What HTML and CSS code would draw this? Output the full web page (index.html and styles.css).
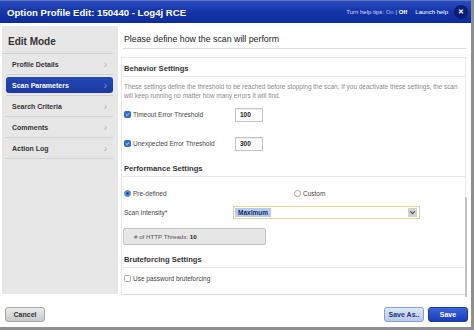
FILE: index.html
```html
<!DOCTYPE html>
<html lang="en">
<head>
  <meta charset="UTF-8">
  <title>Option Profile Edit</title>
  <link rel="stylesheet" href="styles.css">
</head>
<body>
  <div class="dialog">
    <div class="titlebar">
      <h1>Option Profile Edit: 150440 - Log4j RCE</h1>
      <div class="help">
        <span class="tips">Turn help tips: <span class="on">On</span> | <b>Off</b></span>
        <span class="launch">Launch help</span>
        <span class="close">&#x2715;</span>
      </div>
    </div>

    <div class="layout">
      <div class="sidebar">
        <div class="side-head">Edit Mode</div>
        <ul class="nav">
          <li><a>Profile Details<span class="chev">&rsaquo;</span></a></li>
          <li class="active"><a>Scan Parameters<span class="chev">&rsaquo;</span></a></li>
          <li><a>Search Criteria<span class="chev">&rsaquo;</span></a></li>
          <li><a>Comments<span class="chev">&rsaquo;</span></a></li>
          <li><a>Action Log<span class="chev">&rsaquo;</span></a></li>
        </ul>
      </div>

      <div class="main">
        <div class="page-head">Please define how the scan will perform</div>
        <div class="panel">
          <div class="sec-head">Behavior Settings</div>
          <p class="desc">These settings define the threshold to be reached before stopping the scan. If you deactivate these settings, the scan will keep running no matter how many errors it will find.</p>
          <div class="row row-first">
            <span class="check on"><svg viewBox="0 0 8 8"><path d="M1.6 4.2 L3.3 5.8 L6.4 2.2" fill="none" stroke="#fff" stroke-width="1.3"/></svg></span>
            <label>Timeout Error Threshold</label>
            <span class="field">100</span>
          </div>
          <div class="row row-second">
            <span class="check on"><svg viewBox="0 0 8 8"><path d="M1.6 4.2 L3.3 5.8 L6.4 2.2" fill="none" stroke="#fff" stroke-width="1.3"/></svg></span>
            <label>Unexpected Error Threshold</label>
            <span class="field">300</span>
          </div>

          <div class="sec-head sec-perf">Performance Settings</div>
          <div class="radios">
            <span class="opt"><span class="radio on"></span>Pre-defined</span>
            <span class="opt opt-custom"><span class="radio"></span>Custom</span>
          </div>
          <div class="intensity">
            <label>Scan Intensity*</label>
            <div class="select"><span class="picked">Maximum</span><span class="arrow"><svg viewBox="0 0 8 8"><path d="M2 3 L4 5 L6 3" fill="none" stroke="#555" stroke-width="1.2"/></svg></span></div>
          </div>
          <div class="threads"># of HTTP Threads: <b>10</b></div>

          <div class="sec-head sec-brute">Bruteforcing Settings</div>
          <div class="row row-brute">
            <span class="check"></span>
            <label>Use password bruteforcing</label>
          </div>
        </div>
        <div class="scrollbar"></div>
      </div>
    </div>

    <div class="footer">
      <button class="btn">Cancel</button>
      <div class="actions">
        <button class="btn btn-alt">Save As..</button>
        <button class="btn btn-primary">Save</button>
      </div>
    </div>
  </div>
</body>
</html>
```

FILE: styles.css
```css
body { margin: 0; background: #8f8f8f; font-family: "Liberation Sans", Arial, sans-serif; color: #222; }
.dialog { width: 471px; height: 327px; background: #fff; display: flex; flex-direction: column; overflow: hidden; }

.titlebar { height: 23px; flex: none; display: flex; align-items: center; justify-content: space-between; padding: 0 3px 0 7px; background: linear-gradient(#2b4cc0, #1435a8 50%, #0d2c9c); border-top: 1px solid #5a74c8; box-sizing: border-box; }
.titlebar h1 { margin: 0; font-size: 9.6px; font-weight: bold; color: #fff; }
.help { display: flex; align-items: center; font-size: 6px; color: #fff; }
.tips { color: #d6def5; }
.tips .on { color: #a9bcef; }
.tips b { color: #fff; }
.launch { margin-left: 8px; }
.close { width: 14px; height: 14px; margin-left: 6px; border-radius: 50%; background: #0a1d70; color: #fff; font-size: 7px; font-weight: bold; display: flex; align-items: center; justify-content: center; }

.layout { flex: 1; display: flex; min-height: 0; }
.sidebar { flex: none; width: 116px; margin: 3px 0 0 2px; background: #e7e7e7; }
.side-head { height: 28px; box-sizing: border-box; padding: 4px 0 0 6px; display: flex; align-items: center; font-size: 10px; font-weight: bold; color: #333; border-bottom: 1px solid #d2d2d2; margin: 0 5px 0 0; }
.nav { list-style: none; margin: 0 5px 0 4px; padding: 0; }
.nav li { height: 20px; border-bottom: 1px solid #d2d2d2; display: flex; align-items: center; }
.nav a { flex: 1; height: 16px; display: flex; align-items: center; justify-content: space-between; padding: 0 6px; border-radius: 3px; font-size: 7px; font-weight: bold; color: #333; }
.nav .chev { color: #b4b4b4; font-size: 10px; font-weight: normal; }
.nav .active a { background: linear-gradient(#2547b2, #1a3aa2); color: #fff; }
.nav .active .chev { color: #7f95d6; }

.main { flex: 1; min-width: 0; position: relative; padding: 0 5px 0 3px; }
.page-head { height: 26px; box-sizing: border-box; padding: 6px 0 0 1px; margin-left: 2px; display: flex; align-items: center; font-size: 8.8px; color: #222; border-bottom: 1px solid #dcdcdc; }
.panel { margin-top: 8px; border: 1px solid #e8e8e8; border-bottom-color: #dcdcdc; padding-bottom: 8px; }
.sec-head { padding: 4px 0 0 2px; height: 14px; line-height: 14px; font-size: 7.6px; font-weight: bold; color: #333; border-bottom: 1px solid #e8e8e8; }
.desc { margin: 5px 5px 0 2px; font-size: 6.45px; line-height: 9px; color: #8a8a8a; }

.row { display: flex; align-items: center; height: 15px; padding-left: 2px; font-size: 6.5px; color: #444; }
.row label { width: 102px; }
.row-first { margin-top: 7px; }
.row-second { margin-top: 14px; }
.check { width: 7px; height: 7px; margin-right: 2px; border-radius: 1.5px; border: 1px solid #a8a8a8; background: #fff; box-sizing: border-box; display: flex; }
.check.on { background: #2c6fd8; border-color: #2c6fd8; }
.check svg { width: 100%; height: 100%; }
.field { width: 28px; height: 14px; box-sizing: border-box; border: 1px solid #c4c4c4; box-shadow: inset 0 1px 1px rgba(0,0,0,0.08); padding-left: 4px; display: flex; align-items: center; font-weight: bold; color: #222; }

.sec-perf { margin-top: 7px; }
.radios { display: flex; height: 14px; align-items: center; margin-top: 9px; padding-left: 2px; font-size: 6.5px; color: #444; }
.opt { display: flex; align-items: center; width: 170px; }
.radio { width: 7px; height: 7px; margin-right: 2px; border: 1px solid #a8a8a8; border-radius: 50%; box-sizing: border-box; background: #fff; }
.radio.on { border-color: #3a7be0; background: radial-gradient(circle, #1c4fb8 0 1.2px, #5b95ee 1.6px); }

.intensity { display: flex; align-items: center; height: 13px; margin-top: 6px; padding-left: 2px; font-size: 6.5px; color: #444; }
.intensity label { width: 109px; }
.select { width: 187px; height: 13px; box-sizing: border-box; border: 1px solid #d9d99a; display: flex; align-items: center; justify-content: space-between; padding: 0 2px 0 1px; }
.picked { background: #b7cbee; font-weight: bold; color: #1c2a5a; padding: 0 3px; line-height: 9px; }
.arrow { width: 9px; height: 9px; background: #d2d2d2; display: flex; }
.arrow svg { width: 100%; height: 100%; }

.threads { width: 143px; height: 17px; margin: 9px 0 0 1px; box-sizing: border-box; border: 1px solid #c6c6c6; border-radius: 2px; background: #e6e6e6; padding-left: 10px; display: flex; align-items: center; font-size: 6.2px; color: #555; white-space: pre; }
.threads b { color: #222; }

.sec-brute { margin-top: 4px; }
.row-brute { margin-top: 3px; }

.scrollbar { position: absolute; right: 4px; top: 174px; width: 2px; height: 100px; background: #c2c2c2; border-radius: 1px; }

.footer { height: 33px; flex: none; display: flex; align-items: flex-start; justify-content: space-between; padding: 13px 3px 0 5px; box-sizing: border-box; }
.actions { display: flex; gap: 4px; }
.btn { width: 40px; height: 15px; padding: 0; border: 1px solid #a6a6a6; border-radius: 3px; background: linear-gradient(#ececec, #c9c9c9); font-family: inherit; font-size: 7px; font-weight: bold; color: #333; }
.btn-alt { background: linear-gradient(#dde7f7, #b8cbea); border-color: #86a0d2; color: #1c3278; }
.btn-primary { background: linear-gradient(#3a64dc, #1a3cb8); border-color: #1a3aa8; color: #fff; }
```
